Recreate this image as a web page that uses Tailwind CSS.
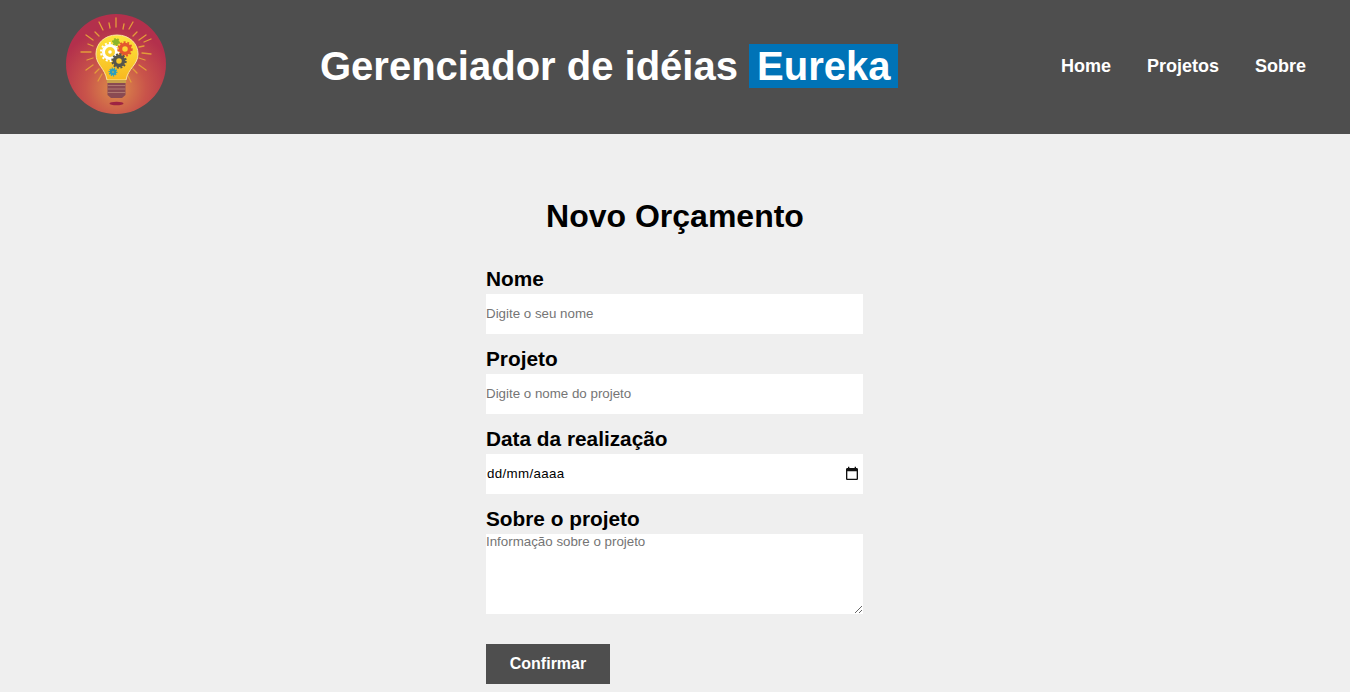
<!DOCTYPE html>
<html lang="pt-BR">
<head>
    <meta charset="utf-8">
    <title>Eureka</title>
    <script src="https://cdn.jsdelivr.net/npm/@tailwindcss/browser@4"></script>
</head>
<body class="bg-[#efefef] h-[692px] overflow-hidden font-['Liberation_Sans',Arial,sans-serif] text-black">
    <!-- Header -->
    <header class="h-[134px] bg-[#4e4e4e] flex items-center pl-[66px] pr-[44px] pb-[6px]">
        <svg class="w-[100px] h-[100px] shrink-0 blur-[0.4px]" viewBox="0 0 100 100">
            <defs>
                <radialGradient id="disc" cx="50%" cy="74%" r="60%">
                    <stop offset="0%" stop-color="#dd8f4a"/>
                    <stop offset="50%" stop-color="#c9544a"/>
                    <stop offset="100%" stop-color="#b3304c"/>
                </radialGradient>
                <linearGradient id="glass" x1="0" y1="0" x2="0" y2="1">
                    <stop offset="0%" stop-color="#fde53c"/>
                    <stop offset="100%" stop-color="#f8b81f"/>
                </linearGradient>
            </defs>
            <circle cx="50" cy="50" r="50" fill="url(#disc)"/>
            <!-- rays -->
            <g stroke="#e39c3a" stroke-width="1.300" stroke-linecap="round" fill="none">
                <path d="M50 4V13M33 8L37 16M43 9L44 14M67 8L63 15M58 10L57 15M20 21L27 26M29 18L33 22M80 21L73 26M71 18L67 22M22 30L27 32M85 25L78 28M78 32L73 33M15 38L25 38M85 40L76 39M21 46L27 44M79 46L73 44M20 56L27 51M80 56L73 51M29 59L33 55M71 59L67 55M32 67L36 60M65 68L61 60"/>
            </g>
            <!-- bulb -->
            <path d="M51 21C38 21 30 30 30 40C30 51 39 54 41 66H60C62 54 72 51 72 40C72 30 64 21 51 21Z" fill="url(#glass)" stroke="#fbe3a0" stroke-width="1"/>
            <!-- gears -->
            <circle cx="44" cy="38" r="6.500" fill="none" stroke="#fff" stroke-width="3"/>
            <circle cx="44" cy="38" r="9" fill="none" stroke="#fff" stroke-width="2" stroke-dasharray="2 2.100"/>
            <circle cx="44" cy="38" r="1.800" fill="#fff"/>
            <circle cx="50" cy="28" r="3" fill="#8cb52a" stroke="#8cb52a" stroke-width="2" stroke-dasharray="1.500 1.500"/>
            <circle cx="59" cy="35" r="4.500" fill="none" stroke="#e4572e" stroke-width="3.500"/>
            <circle cx="59" cy="35" r="6.800" fill="none" stroke="#e4572e" stroke-width="1.800" stroke-dasharray="2 1.800"/>
            <circle cx="53" cy="47" r="4.500" fill="none" stroke="#55554c" stroke-width="3.500"/>
            <circle cx="53" cy="47" r="6.800" fill="none" stroke="#55554c" stroke-width="1.800" stroke-dasharray="2 1.600"/>
            <circle cx="47" cy="58" r="2" fill="none" stroke="#2a9fc0" stroke-width="2.500"/>
            <circle cx="47" cy="58" r="3.800" fill="none" stroke="#2a9fc0" stroke-width="1.200" stroke-dasharray="1.200 1.100"/>
            <!-- base -->
            <path d="M41 66H60V69H41Z" fill="#c9a24a"/>
            <path d="M41.500 69H59.500V81L56 84H45L41.500 81Z" fill="#8a4a52"/>
            <g stroke="#b07870" stroke-width="1" stroke-linecap="round">
                <path d="M42 71.500H59M42 75H59M42 78.500H59"/>
            </g>
            <ellipse cx="50.500" cy="89.500" rx="7" ry="1.800" fill="#9e2342"/>
        </svg>

        <h1 class="text-[40px] leading-[44px] font-bold text-white ml-[154px] mt-[4px] whitespace-nowrap">
            Gerenciador de idéias <span class="bg-[#0073b7] px-2 inline-block">Eureka</span>
        </h1>

        <nav class="ml-auto mt-[4px] flex gap-9 text-[18px] font-bold text-white">
            <a href="#">Home</a>
            <a href="#">Projetos</a>
            <a href="#">Sobre</a>
        </nav>
    </header>

    <!-- Form -->
    <main class="flex flex-col items-center pt-[64px]">
        <h2 class="text-[32px] leading-[37px] font-bold mb-[32px]">Novo Orçamento</h2>

        <form class="w-[377px] mr-px flex flex-col">
            <label class="text-[20.8px] leading-[24px] font-bold mb-[3px]" for="nome">Nome</label>
            <input id="nome" type="text" placeholder="Digite o seu nome" class="h-10 pb-[2px] bg-white text-[13.333px] outline-none placeholder:text-[#757575] mb-[13px]">

            <label class="text-[20.8px] leading-[24px] font-bold mb-[3px]" for="projeto">Projeto</label>
            <input id="projeto" type="text" placeholder="Digite o nome do projeto" class="h-10 pb-[2px] bg-white text-[13.333px] outline-none placeholder:text-[#757575] mb-[13px]">

            <label class="text-[20.8px] leading-[24px] font-bold mb-[3px]">Data da realização</label>
            <div class="h-10 bg-white text-[13.333px] tracking-[0.35px] flex items-center justify-between pl-px pr-[3px] mb-[13px]">
                <span>dd/mm/aaaa</span>
                <svg class="w-[16px] h-[16px]" viewBox="0 0 24 24" fill="#111"><path d="M19 3h-1V1h-2v2H8V1H6v2H5c-1.100 0-2 .9-2 2v14c0 1.100.9 2 2 2h14c1.100 0 2-.9 2-2V5c0-1.100-.9-2-2-2zm0 16H5V8h14v11z"/></svg>
            </div>

            <label class="text-[20.8px] leading-[24px] font-bold mb-[3px]" for="sobre">Sobre o projeto</label>
            <textarea id="sobre" placeholder="Informação sobre o projeto" class="block h-20 bg-white text-[13.333px] leading-[15px] outline-none placeholder:text-[#757575] mb-[30px]"></textarea>

            <button type="button" class="w-[124px] h-10 bg-[#4e4e4e] text-white font-bold text-[16px]">Confirmar</button>
        </form>
    </main>
</body>
</html>
